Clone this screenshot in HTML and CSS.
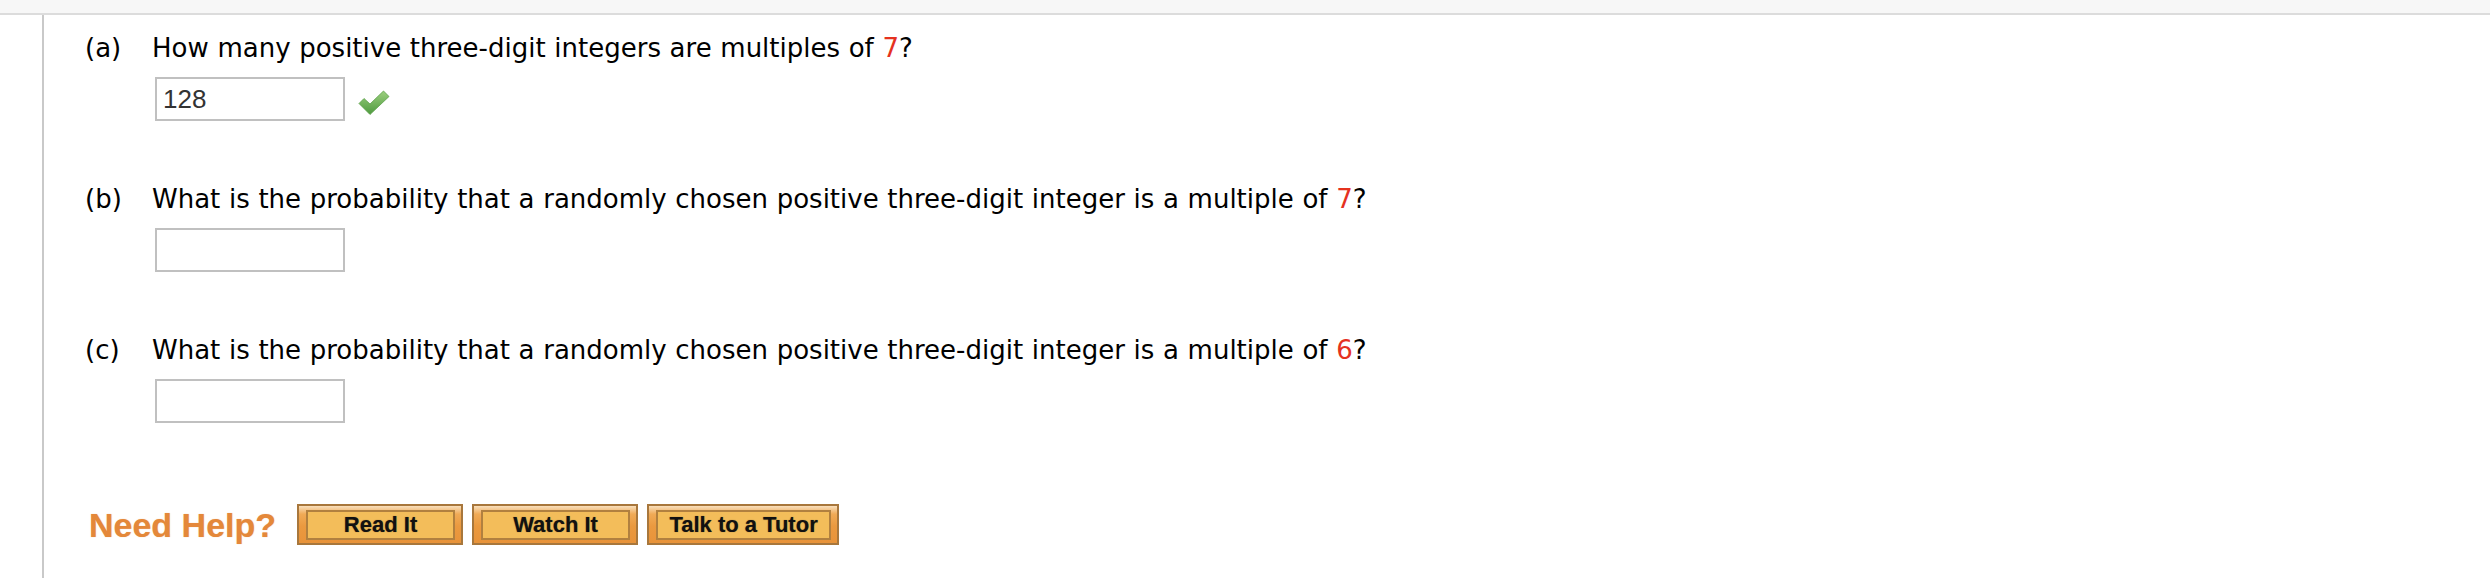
FILE: index.html
```html
<!DOCTYPE html>
<html>
<head>
<meta charset="utf-8">
<link rel="stylesheet" href="styles.css">
</head>
<body>
<div class="topbar"></div>
<div class="page">
  <div class="part">
    <div class="q"><span class="lbl">(a)</span><span class="qt">How many positive three-digit integers are multiples of <span class="red">7</span>?</span></div>
    <div class="ans">
      <div class="box">128</div>
      <svg class="check" width="32" height="25" viewBox="0 0 32 25">
        <defs>
          <linearGradient id="g" x1="0" y1="0" x2="0" y2="1">
            <stop offset="0" stop-color="#9ccf7e"/>
            <stop offset="1" stop-color="#4e9a3f"/>
          </linearGradient>
        </defs>
        <path d="M1 13.5 L6 8.5 L12 14 L25.5 1 L31 6.5 L12 24.5 Z" fill="url(#g)" stroke="#5a9f48" stroke-width="0.8" stroke-linejoin="round"/>
      </svg>
    </div>
  </div>
  <div class="part">
    <div class="q"><span class="lbl">(b)</span><span class="qt">What is the probability that a randomly chosen positive three-digit integer is a multiple of <span class="red">7</span>?</span></div>
    <div class="ans"><div class="box"></div></div>
  </div>
  <div class="part">
    <div class="q"><span class="lbl">(c)</span><span class="qt">What is the probability that a randomly chosen positive three-digit integer is a multiple of <span class="red">6</span>?</span></div>
    <div class="ans"><div class="box"></div></div>
  </div>
  <div class="help">
    <span class="need">Need Help?</span>
    <div class="btn"><div class="inner">Read It</div></div>
    <div class="btn"><div class="inner">Watch It</div></div>
    <div class="btn wide"><div class="inner">Talk to a Tutor</div></div>
  </div>
</div>
</body>
</html>
```

FILE: styles.css
```css
html, body {
  margin: 0;
  padding: 0;
  background: #fff;
}
body {
  width: 2490px;
  height: 578px;
  overflow: hidden;
}
.topbar {
  height: 13px;
  background: #f7f7f7;
  border-bottom: 2px solid #dcdcdc;
}
.page {
  margin-left: 42px;
  border-left: 2px solid #c9c9c9;
  height: 563px;
  box-sizing: border-box;
  padding-left: 41px;
  padding-top: 17px;
  font-family: Verdana, "DejaVu Sans", sans-serif;
  font-size: 26px;
  color: #000;
}
.part + .part {
  margin-top: 62px;
}
.q {
  display: flex;
  line-height: 32px;
  white-space: nowrap;
  word-spacing: 0.4px;
}
.lbl {
  width: 67px;
  flex: none;
  word-spacing: 0;
}
.red {
  color: #e5321f;
}
.ans {
  margin-top: 13px;
  margin-left: 70px;
  height: 44px;
  display: flex;
  align-items: center;
}
.box {
  width: 190px;
  height: 44px;
  box-sizing: border-box;
  border: 2px solid #c0c0c0;
  background: #fff;
  font-family: Arial, "Liberation Sans", sans-serif;
  font-size: 26px;
  color: #333;
  padding-left: 6px;
  line-height: 40px;
}
.check {
  margin-left: 13px;
  margin-top: 7px;
}
.help {
  margin-top: 80px;
  margin-left: 4px;
  display: flex;
  align-items: center;
}
.need {
  font-family: Arial, "Liberation Sans", sans-serif;
  font-weight: bold;
  font-size: 34px;
  color: #e4883a;
  text-shadow: 0 0 1px rgba(228, 136, 58, 0.6);
  margin-right: 21px;
  line-height: 41px;
  margin-top: 2px;
}
.btn {
  width: 166px;
  height: 41px;
  box-sizing: border-box;
  border: 2px solid #a8773c;
  padding: 4px 6px 3px 7px;
  background: linear-gradient(#f9dfbb 0, #f0aa56 22%, #ea993f 55%, #e8933a 100%);
  margin-right: 9px;
}
.btn.wide {
  width: 192px;
}
.inner {
  height: 30px;
  box-sizing: border-box;
  border: 2px solid #b1803f;
  background: #f3bd5a;
  font-family: Arial, "Liberation Sans", sans-serif;
  font-weight: bold;
  font-size: 22px;
  color: #111;
  text-align: center;
  line-height: 26px;
  text-shadow: 0 0 1px rgba(0, 0, 0, 0.5);
}
```
